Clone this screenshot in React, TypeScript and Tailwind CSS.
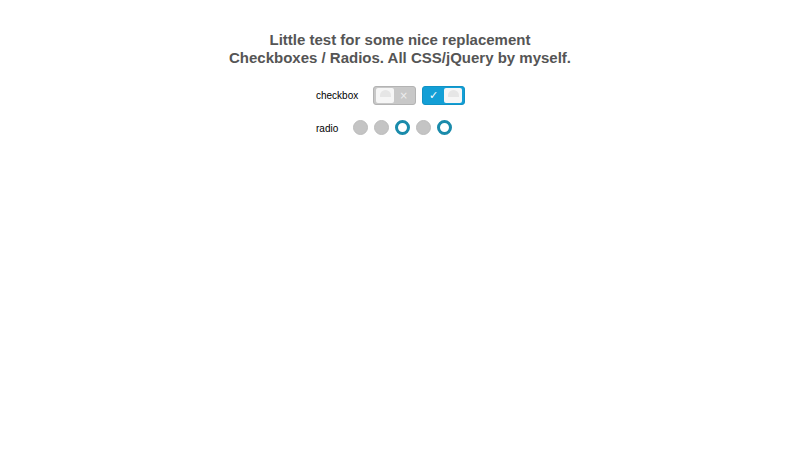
import React from "react";

function Knob({ side }: { side: "left" | "right" }) {
  return (
    <div
      className={
        "absolute top-[1px] w-[18px] h-[15px] rounded-[2px] bg-[#f6f6f6] flex items-start justify-center pt-[2px] " +
        (side === "left" ? "left-[2px]" : "right-[2px]")
      }
    >
      <div className="w-[11px] h-[7px] rounded-t-full bg-[#e6e6e6]" />
    </div>
  );
}

function Toggle({ on }: { on: boolean }) {
  if (on) {
    return (
      <div className="relative w-[43px] h-[19px] rounded-[3px] bg-[#139fd6] border border-[#1192c4]">
        <span className="absolute left-[6px] top-[1px] text-white text-[11px] leading-[16px]" style={{ fontFamily: '"DejaVu Sans", sans-serif' }}>✓</span>
        <Knob side="right" />
      </div>
    );
  }
  return (
    <div className="relative w-[43px] h-[19px] rounded-[3px] bg-[#c8c8c8] border border-[#b3b3b3]">
      <Knob side="left" />
      <span className="absolute right-[7px] top-[1px] text-[#eeeeee] text-[10px] leading-[16px]" style={{ fontFamily: '"DejaVu Sans", sans-serif' }}>×</span>
    </div>
  );
}

function Radio({ on }: { on: boolean }) {
  return on ? (
    <div className="w-[15px] h-[15px] rounded-full border-[3px] border-[#1a8bab] bg-white" />
  ) : (
    <div className="w-[15px] h-[15px] rounded-full bg-[#c4c4c4] border border-[#bcbcbc]" />
  );
}

export default function App() {
  return (
    <div className="w-[800px] h-[450px] bg-white" style={{ fontFamily: '"Liberation Sans", Arial, sans-serif' }}>
      <h1 className="pt-[31px] text-center text-[15px] leading-[18px] font-bold text-[#555555]">
        Little test for some nice replacement
        <br />
        Checkboxes / Radios. All CSS/jQuery by myself.
      </h1>
      <div className="ml-[316px] mt-[18px] flex flex-col gap-[12px]">
        <div className="flex items-center h-[20px]">
          <span className="text-[10px] text-black w-[57px]">checkbox</span>
          <div className="flex gap-[6px]">
            <Toggle on={false} />
            <Toggle on={true} />
          </div>
        </div>
        <div className="flex items-center h-[20px]">
          <span className="text-[10px] text-black w-[37px] pt-[2px]">radio</span>
          <div className="flex gap-[6px]">
            <Radio on={false} />
            <Radio on={false} />
            <Radio on={true} />
            <Radio on={false} />
            <Radio on={true} />
          </div>
        </div>
      </div>
    </div>
  );
}
